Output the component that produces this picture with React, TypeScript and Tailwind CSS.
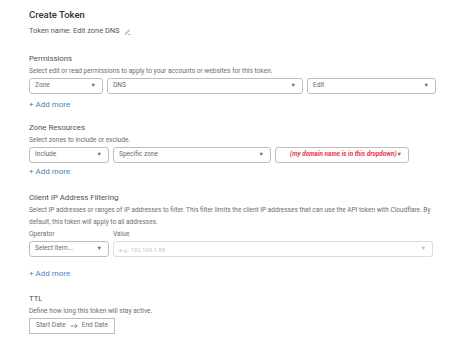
function Caret({ cls = 'text-[#666]' }: { cls?: string }) {
  return <span className={`ml-auto text-[5.5px] leading-none ${cls}`}>▼</span>
}

function Select({ label, w, red }: { label: string; w: string; red?: boolean }) {
  return (
    <div className={`${w} h-4 flex items-center pl-[5px] pr-[6px] border border-[#bdbdbd] rounded-[3px] bg-white whitespace-nowrap`}>
      <span className={red ? 'text-[6.4px] font-bold italic text-[#e8344a] ml-[9px]' : 'text-[6.6px] text-[#6a6a6a]'}>{label}</span>
      <Caret />
    </div>
  )
}

function AddMore({ cls }: { cls: string }) {
  return <div className={`${cls} text-[8px] leading-[14px] text-[#4a80be]`}>+ Add more</div>
}

export default function App() {
  return (
    <div className="w-[474px] h-[364px] bg-white pl-[29px] pt-[6px] text-[#505050]" style={{ fontFamily: 'Roboto, sans-serif' }}>
      <div className="text-[9.5px] leading-[18px] font-medium text-[#333]">Create Token</div>
      <div className="flex items-center gap-[5px] text-[7.4px] leading-[12px] mt-[1px] text-[#555]">
        Token name: Edit zone DNS
        <svg width="7" height="7" viewBox="0 0 10 10" fill="none" stroke="#888" strokeWidth="0.9">
          <path d="M2 7.5 L7 2.5 L8 3.5 L3 8.5 L1.5 9 Z" />
          <path d="M5.5 9.3 H9" />
        </svg>
      </div>

      <div className="mt-[16px] text-[7.8px] leading-[12px]">Permissions</div>
      <div className="text-[6.6px] leading-[12px] text-[#6e6e6e]">Select edit or read permissions to apply to your accounts or websites for this token.</div>
      <div className="flex gap-[4px] mt-[1px]">
        <Select label="Zone" w="w-[74px]" />
        <Select label="DNS" w="w-[196px]" />
        <Select label="Edit" w="w-[129px]" />
      </div>
      <AddMore cls="mt-[4px]" />

      <div className="mt-[10px] text-[7.8px] leading-[12px]">Zone Resources</div>
      <div className="text-[6.6px] leading-[12px] text-[#6e6e6e]">Select zones to include or exclude.</div>
      <div className="flex gap-[4px] mt-[1px]">
        <Select label="Include" w="w-[80px]" />
        <Select label="Specific zone" w="w-[158px]" />
        <Select label="(my domain name is in this dropdown)" w="w-[134px]" red />
      </div>
      <AddMore cls="mt-[2px]" />

      <div className="mt-[13px] text-[7.8px] leading-[12px]">Client IP Address Filtering</div>
      <div className="text-[6.5px] leading-[12px] text-[#6e6e6e] whitespace-nowrap">
        Select IP addresses or ranges of IP addresses to filter. This filter limits the client IP addresses that can use the API token with Cloudflare. By
        <br />
        default, this token will apply to all addresses.
      </div>
      <div className="flex gap-[4px] text-[6.6px] leading-[12px] text-[#6e6e6e]">
        <div className="w-[80px]">Operator</div>
        <div>Value</div>
      </div>
      <div className="flex gap-[4px] mt-[1px]">
        <Select label="Select item..." w="w-[80px]" />
        <div className="w-[320px] h-4 flex items-center pl-[5px] pr-[6px] border border-[#dcdcdc] rounded-[3px]">
          <span className="text-[6px] text-[#cacaca]">e.g. 192.168.1.88</span>
          <Caret cls="text-[#b8b8b8]" />
        </div>
      </div>
      <AddMore cls="mt-[10px]" />

      <div className="mt-[12px] text-[7.8px] leading-[12px]">TTL</div>
      <div className="text-[6.6px] leading-[12px] text-[#6e6e6e]">Define how long this token will stay active.</div>
      <div className="mt-[1px] w-[86px] h-4 flex items-center justify-between px-[6px] border border-[#bdbdbd] text-[6.6px] text-[#6e6e6e] whitespace-nowrap">
        <span>Start Date</span>
        <svg width="8" height="6" viewBox="0 0 8 6" fill="none" stroke="#777" strokeWidth="0.8">
          <path d="M0.5 3 H7.2 M4.8 0.8 L7.2 3 L4.8 5.2" />
        </svg>
        <span>End Date</span>
      </div>
    </div>
  )
}
